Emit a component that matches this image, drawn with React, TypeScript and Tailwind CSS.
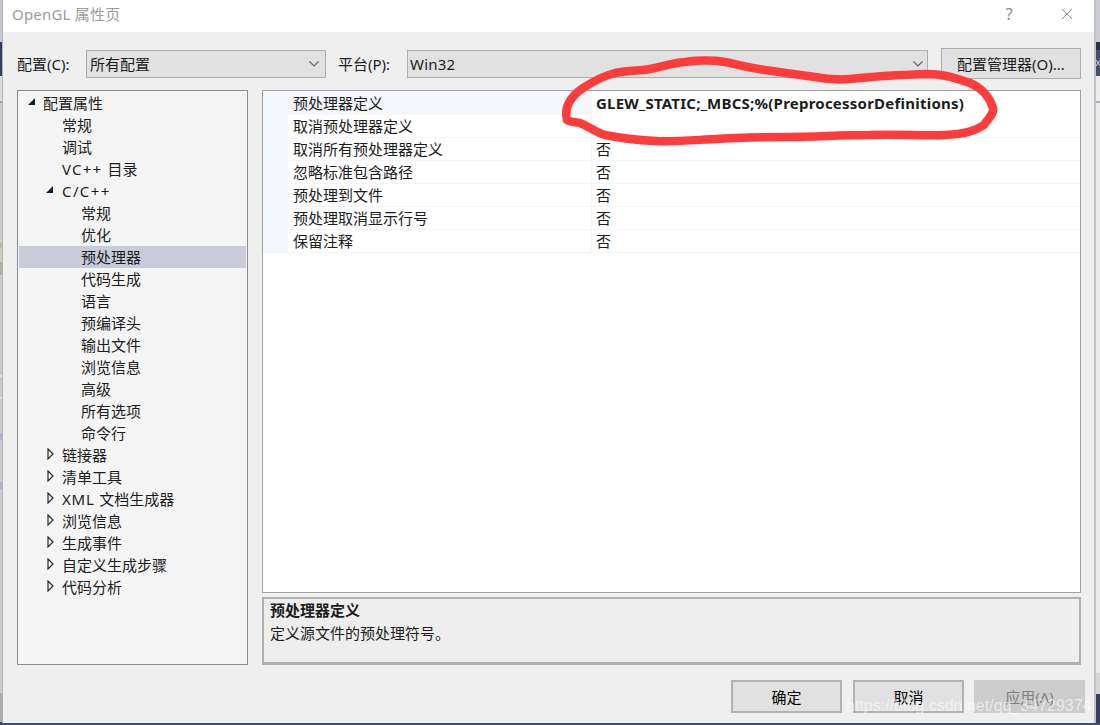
import React from "react";

const Expanded = () => (
  <svg width="9" height="9" viewBox="0 0 9 9" className="shrink-0">
    <polygon points="8,1 8,8 1,8" fill="#1e1e1e" />
  </svg>
);
const Collapsed = () => (
  <svg width="7" height="12" viewBox="0 0 7 12" className="shrink-0">
    <polygon points="1,1 6,6 1,11" fill="none" stroke="#2a2a2a" strokeWidth="1.2" />
  </svg>
);
const Chevron = () => (
  <svg width="12" height="8" viewBox="0 0 12 8" className="shrink-0">
    <polyline points="1.5,1.5 6,6 10.5,1.5" fill="none" stroke="#666" strokeWidth="1.2" />
  </svg>
);

type T = { label: React.ReactNode; level: 0 | 1 | 2; icon?: "open" | "closed"; selected?: boolean };
const tree: T[] = [
  { label: "配置属性", level: 0, icon: "open" },
  { label: "常规", level: 1 },
  { label: "调试", level: 1 },
  {
    label: (
      <>
        <span className="tracking-[1.2px]">VC++ </span>目录
      </>
    ),
    level: 1,
  },
  { label: <span className="tracking-[1.4px]">C/C++</span>, level: 1, icon: "open" },
  { label: "常规", level: 2 },
  { label: "优化", level: 2 },
  { label: "预处理器", level: 2, selected: true },
  { label: "代码生成", level: 2 },
  { label: "语言", level: 2 },
  { label: "预编译头", level: 2 },
  { label: "输出文件", level: 2 },
  { label: "浏览信息", level: 2 },
  { label: "高级", level: 2 },
  { label: "所有选项", level: 2 },
  { label: "命令行", level: 2 },
  { label: "链接器", level: 1, icon: "closed" },
  { label: "清单工具", level: 1, icon: "closed" },
  {
    label: (
      <>
        <span className="tracking-[0.75px]">XML </span>文档生成器
      </>
    ),
    level: 1,
    icon: "closed",
  },
  { label: "浏览信息", level: 1, icon: "closed" },
  { label: "生成事件", level: 1, icon: "closed" },
  { label: "自定义生成步骤", level: 1, icon: "closed" },
  { label: "代码分析", level: 1, icon: "closed" },
];

const rows: [string, string][] = [
  ["取消预处理器定义", ""],
  ["取消所有预处理器定义", "否"],
  ["忽略标准包含路径", "否"],
  ["预处理到文件", "否"],
  ["预处理取消显示行号", "否"],
  ["保留注释", "否"],
];

function TreeRow({ t }: { t: T }) {
  const pad = t.level === 0 ? "pl-[24px]" : t.level === 1 ? "pl-[43px]" : "pl-[62px]";
  return (
    <div className={`relative flex h-[22px] items-center ${pad} ${t.selected ? "bg-[#c9cbd9]" : ""}`}>
      {t.icon === "open" && (
        <span className={`absolute top-[5px] flex ${t.level === 0 ? "left-[8px]" : "left-[26px]"}`}>
          <Expanded />
        </span>
      )}
      {t.icon === "closed" && (
        <span className="absolute left-[28px] top-[4px] flex">
          <Collapsed />
        </span>
      )}
      <span className="whitespace-pre">{t.label}</span>
    </div>
  );
}

export default function App() {
  return (
    <div className="relative flex h-[725px] w-[1100px] flex-col overflow-hidden bg-[#3e4e6c] text-[15px] leading-[22px] text-[#1c1c1c] [font-family:'Noto_Sans','Noto_Sans_CJK_SC',sans-serif]">
      <div className="flex h-[723px]">
        {/* window behind, left */}
        <div className="flex w-[3px] flex-col border-r border-[#b4b4b4] bg-[#cbcbcb]">
          <div className="h-[42px] bg-[#c6c9d1]" />
          <div className="h-[34px] bg-[#2f4060]" />
          <div className="h-[25px] bg-[#dcdcdc]" />
          <div className="h-[2px] bg-[#8fa2c0]" />
          <div className="h-[140px]" />
          <div className="h-[5px] bg-[#c4b98c]" />
          <div className="h-[14px]" />
          <div className="h-[13px] bg-[#a3b89a]" />
          <div className="h-[100px]" />
          <div className="h-[2px] bg-[#e0e0e0]" />
          <div className="h-[20px]" />
          <div className="h-[2px] bg-[#e0e0e0]" />
          <div className="h-[34px]" />
          <div className="h-[7px] bg-[#b4aed6]" />
          <div className="h-[42px]" />
          <div className="h-[7px] bg-[#b4aed6]" />
          <div className="h-[204px]" />
          <div className="h-[29px] bg-[#a9a9a9]" />
          <div className="flex-1 bg-[#2f4060]" />
        </div>

        {/* dialog */}
        <div className="flex flex-1 flex-col bg-[#efefef]">
          <div className="flex h-[32px] items-center bg-white pb-[4px] pl-[9px] pr-[21px] text-[15px] tracking-[0.2px] text-[#9c9c9c]">
            <span className="flex-1">OpenGL 属性页</span>
            <span className="mr-[48px] text-[16px] text-[#8a8a8a]">?</span>
            <svg width="12" height="12" viewBox="0 0 12 12">
              <path d="M1 1 L11 11 M11 1 L1 11" stroke="#8a8a8a" strokeWidth="1" fill="none" />
            </svg>
          </div>

          <div className="flex flex-1 flex-col pl-[14px] pr-[13px] pt-[16px]">
            {/* toolbar */}
            <div className="flex h-[31px] items-center">
              <span className="w-[69px]">配置(C):</span>
              <div className="flex h-[28px] w-[240px] items-center justify-between border border-[#adadad] bg-[#e1e1e1] pl-[3px] pr-[5px]">
                <span>所有配置</span>
                <Chevron />
              </div>
              <span className="ml-[12px] w-[69px]">平台(P):</span>
              <div className="flex h-[28px] w-[521px] items-center justify-between border border-[#adadad] bg-[#e1e1e1] pl-[2px] pr-[3px]">
                <span className="tracking-[0.2px]">Win32</span>
                <Chevron />
              </div>
              <div className="ml-[13px] flex h-[31px] flex-1 items-center justify-center border border-[#adadad] bg-[#e1e1e1]">
                配置管理器(O)...
              </div>
            </div>

            {/* main */}
            <div className="mt-[11px] flex h-[575px] gap-[14px]">
              <div className="w-[231px] border border-[#8a8a96] bg-[#f5f5f5] p-px">
                {tree.map((t, i) => (
                  <TreeRow key={i} t={t} />
                ))}
              </div>
              <div className="flex flex-1 flex-col gap-[4px]">
                <div className="h-[503px] border border-[#a0a0a0] bg-white">
                  <div className="flex h-[24px] items-center">
                    <div className="flex h-full w-[329px] items-center bg-[#f4f7fc] pl-[30px]">预处理器定义</div>
                    <div className="pl-[4px] font-bold tracking-[0.23px]">GLEW_STATIC;_MBCS;%(PreprocessorDefinitions)</div>
                  </div>
                  {rows.map(([a, b]) => (
                    <div key={a} className="flex h-[23px] border-b border-[#f3f5fa]">
                      <div className="w-[25px] bg-[#f4f7fc]" />
                      <div className="flex w-[304px] items-center border-r border-[#f3f5fa] pl-[5px]">{a}</div>
                      <div className="flex items-center pl-[4px]">{b}</div>
                    </div>
                  ))}
                </div>
                <div className="flex h-[68px] flex-col border-2 border-b-[3px] border-[#b0b0b0] bg-[#eeeeee] px-[6px]">
                  <div className="h-[21px] font-bold">预处理器定义</div>
                  <div className="flex h-[26px] items-center">定义源文件的预处理符号。</div>
                </div>
              </div>
            </div>

            {/* footer */}
            <div className="-mr-[4px] mt-[15px] flex justify-end">
              <div className="flex h-[33px] w-[111px] items-center justify-center border-2 border-[#b2b2b2] bg-[#e1e1e1] text-[#000]">确定</div>
              <div className="ml-[11px] flex h-[33px] w-[111px] items-center justify-center border-2 border-[#b2b2b2] bg-[#e1e1e1] text-[#000]">取消</div>
              <div className="ml-[10px] flex h-[33px] w-[111px] items-center justify-center bg-[#cccccc] text-[#7f7f7f]">应用(A)</div>
            </div>
          </div>
        </div>

        {/* window behind, right */}
        <div className="flex w-[6px] flex-col border-l-2 border-[#c2c2c2] bg-[#ebebeb]">
          <div className="h-[42px] bg-[#c9cdd6]" />
          <div className="h-[8px] bg-[#26344f]" />
          <div className="flex h-[26px] items-center bg-[#3f5170]">
            <svg width="4" height="8" viewBox="0 0 4 8">
              <path d="M0 1 L4 7 M4 1 L0 7" stroke="#d5d9e0" strokeWidth="1" fill="none" />
            </svg>
          </div>
          <div className="h-[25px] bg-[#ececec]" />
          <div className="h-[2px] bg-[#9fb0ca]" />
          <div className="h-[570px]" />
          <div className="h-[21px] bg-[#d6d6d6]" />
          <div className="flex-1 bg-[#2f4060]" />
        </div>
      </div>

      {/* red marker scribble over the dialog */}
      <svg className="pointer-events-none absolute left-0 top-0" width="1100" height="725" viewBox="0 0 1100 725">
        <path
          d="M567 120 C564 108 570 97 583 88 C595 80 603 76 615 73 C630 70 640 71 650 69 C665 66 672 63 685 62 C700 60 712 60 725 62 C740 65 750 68 765 70 C785 73 800 75 815 77 C830 80 845 80 860 78 C880 76 900 75 925 74 C945 74 955 78 970 83 C982 88 990 98 993 108 C994 115 988 118 984 125 C975 131 965 134 945 135 C920 136 900 134 870 135 C840 135 815 137 790 137 C760 137 740 137 715 139 C695 140 675 142 655 141 C635 140 620 138 605 135 C595 132 590 127 580 123 C575 122 570 122 567 120 Z"
          fill="none"
          stroke="#ff3c3c"
          strokeWidth="8.5"
          strokeLinejoin="round"
        />
      </svg>

      {/* watermark */}
      <div className="pointer-events-none absolute left-[846px] top-[695px] whitespace-nowrap text-[16px] leading-[22px] text-white/60 [font-family:'Liberation_Sans',sans-serif]">
        https://blog.csdn.net/qq_34729374
      </div>
    </div>
  );
}
